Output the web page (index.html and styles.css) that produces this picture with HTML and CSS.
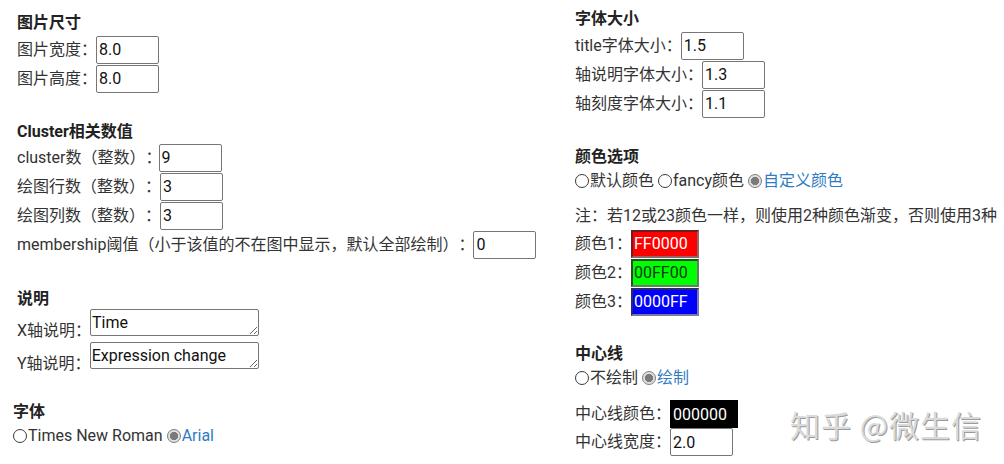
FILE: index.html
```html
<!DOCTYPE html>
<html lang="zh">
<head>
<meta charset="utf-8">
<title>绘图参数</title>
<link rel="stylesheet" href="styles.css">
</head>
<body>
<div class="page">
  <div class="col col-left">
    <section class="sec sec-size">
      <h3 class="title">图片尺寸</h3>
      <div class="row"><span class="lbl">图片宽度：</span><input class="inp" type="text" value="8.0"></div>
      <div class="row"><span class="lbl">图片高度：</span><input class="inp" type="text" value="8.0"></div>
    </section>
    <section class="sec sec-cluster">
      <h3 class="title title-tight">Cluster相关数值</h3>
      <div class="row"><span class="lbl">cluster数（整数）：</span><input class="inp inp-l" type="text" value="9"></div>
      <div class="row"><span class="lbl">绘图行数（整数）：</span><input class="inp" type="text" value="3"></div>
      <div class="row"><span class="lbl">绘图列数（整数）：</span><input class="inp" type="text" value="3"></div>
      <div class="row"><span class="lbl">membership阈值（小于该值的不在图中显示，默认全部绘制）：</span><input class="inp" type="text" value="0"></div>
    </section>
    <section class="sec sec-desc">
      <h3 class="title title-flush">说明</h3>
      <div class="trow"><span class="lbl">X轴说明：</span><textarea class="ta">Time</textarea></div>
      <div class="trow"><span class="lbl">Y轴说明：</span><textarea class="ta">Expression change</textarea></div>
    </section>
    <section class="sec sec-font">
      <h3 class="title">字体</h3>
      <div class="radios">
        <label class="opt"><input type="radio" name="font" class="rad">Times New Roman</label>
        <label class="opt on"><input type="radio" name="font" class="rad" checked>Arial</label>
      </div>
    </section>
  </div>
  <div class="col col-right">
    <section class="sec sec-fs">
      <h3 class="title">字体大小</h3>
      <div class="row"><span class="lbl">title字体大小：</span><input class="inp" type="text" value="1.5"></div>
      <div class="row"><span class="lbl">轴说明字体大小：</span><input class="inp" type="text" value="1.3"></div>
      <div class="row"><span class="lbl">轴刻度字体大小：</span><input class="inp" type="text" value="1.1"></div>
    </section>
    <section class="sec sec-color">
      <h3 class="title">颜色选项</h3>
      <div class="radios">
        <label class="opt"><input type="radio" name="color" class="rad">默认颜色</label>
        <label class="opt"><input type="radio" name="color" class="rad">fancy颜色</label>
        <label class="opt on"><input type="radio" name="color" class="rad" checked>自定义颜色</label>
      </div>
      <p class="note">注：若12或23颜色一样，则使用2种颜色渐变，否则使用3种</p>
      <div class="row"><span class="lbl">颜色1：</span><input class="inp cinp c-red" type="text" value="FF0000"></div>
      <div class="row"><span class="lbl">颜色2：</span><input class="inp cinp c-green" type="text" value="00FF00"></div>
      <div class="row"><span class="lbl">颜色3：</span><input class="inp cinp c-blue" type="text" value="0000FF"></div>
    </section>
    <section class="sec sec-center">
      <h3 class="title">中心线</h3>
      <div class="radios">
        <label class="opt"><input type="radio" name="cl" class="rad">不绘制</label>
        <label class="opt on"><input type="radio" name="cl" class="rad" checked>绘制</label>
      </div>
      <div class="rows-tight">
        <div class="row row28"><span class="lbl">中心线颜色：</span><input class="inp c-black" type="text" value="000000"></div>
        <div class="row row28"><span class="lbl">中心线宽度：</span><input class="inp" type="text" value="2.0"></div>
      </div>
    </section>
  </div>
</div>
<div class="watermark">知乎 @微生信</div>
</body>
</html>
```

FILE: styles.css
```css
html, body {
  margin: 0;
  padding: 0;
  background: #ffffff;
}
body {
  font-family: Roboto, "Noto Sans CJK SC", sans-serif;
  font-size: 16px;
  color: #333333;
  width: 1004px;
  height: 464px;
  overflow: hidden;
  position: relative;
  text-spacing-trim: space-all;
}
.page {
  display: flex;
}
.col-left {
  width: 558px;
  padding-left: 17px;
}
.col-right {
  flex: 1;
}
.title {
  margin: 0 0 2px 0;
  padding-top: 1px;
  height: 21px;
  font-size: 16px;
  font-weight: bold;
  line-height: 22px;
  color: #222222;
}
.title-tight { margin-bottom: 1px; }
.title-flush { margin-bottom: 0; }
.row {
  display: flex;
  align-items: center;
  height: 29px;
  white-space: nowrap;
}
.row28 { height: 28px; }
.lbl {
  line-height: 22px;
}
.inp {
  box-sizing: border-box;
  width: 63px;
  height: 28px;
  margin: 0 0 0 -1px;
  padding: 0 2px;
  font-family: Roboto, "Noto Sans CJK SC", sans-serif;
  font-size: 16px;
  color: #111111;
  border: 1px solid #767676;
  border-radius: 2px;
  background: #ffffff;
}
.inp-l { margin-left: -3px; }
.cinp {
  width: 68px;
  border: 2px solid #5a5a5a;
  border-radius: 0;
  padding: 0 1px;
}
.c-red { background: #ff0000; color: #ffffff; border-color: #6e1e1e #8a6a6a #8a6a6a #6e1e1e; }
.c-green { background: #00ff00; color: #0d3a0d; border-color: #2a4a2a #6a7a6a #6a7a6a #2a4a2a; }
.c-blue { background: #0000ff; color: #ffffff; border-color: #2a2a6a #7a7aa0 #7a7aa0 #2a2a6a; }
.c-black {
  width: 68px;
  background: #000000;
  color: #ffffff;
  border: 1px solid #000000;
  border-radius: 0;
}
.trow {
  height: 33px;
  white-space: nowrap;
}
.ta {
  box-sizing: border-box;
  width: 169px;
  height: 27px;
  margin: 0 0 0 -1px;
  padding: 2px 1px 0 1px;
  font-family: Roboto, "Noto Sans CJK SC", sans-serif;
  font-size: 16px;
  line-height: 22px;
  color: #111111;
  border: 1px solid #767676;
  border-radius: 2px;
  overflow: hidden;
  vertical-align: baseline;
  resize: both;
}
.radios {
  display: flex;
  align-items: center;
  height: 22px;
  margin-top: 3px;
  white-space: nowrap;
}
.opt {
  display: flex;
  align-items: center;
  margin-right: 4px;
  line-height: 22px;
}
.opt.on { color: #2f7bc4; }
.rad {
  appearance: none;
  -webkit-appearance: none;
  box-sizing: border-box;
  width: 14px;
  height: 14px;
  margin: 0 1px 0 0;
  border: 1px solid #3a3a3a;
  border-radius: 50%;
  background: #ffffff;
}
.rad:checked {
  border: 1.5px solid #7c7c7c;
  background: radial-gradient(circle, #7a7a7a 0 3.8px, #e0e0e0 4.4px 100%);
}
.note {
  margin: 13px 0 2px 0;
  line-height: 22px;
  white-space: nowrap;
}
.sec-size { margin-top: 11px; }
.sec-cluster { margin-top: 27px; }
.sec-desc { margin-top: 28px; }
.sec-font { margin-top: 25px; margin-left: -4px; }
.sec-fs { margin-top: 7px; }
.sec-color { margin-top: 27px; }
.sec-center { margin-top: 26px; }
.rows-tight { margin-top: 11px; }
.watermark {
  position: absolute;
  left: 790px;
  top: 404px;
  font-family: "Noto Sans CJK SC", sans-serif;
  font-size: 30px;
  line-height: 40px;
  letter-spacing: 1px;
  color: #dadada;
  text-shadow: 1px 1px 0 #9a9a9a;
  white-space: nowrap;
}
```
